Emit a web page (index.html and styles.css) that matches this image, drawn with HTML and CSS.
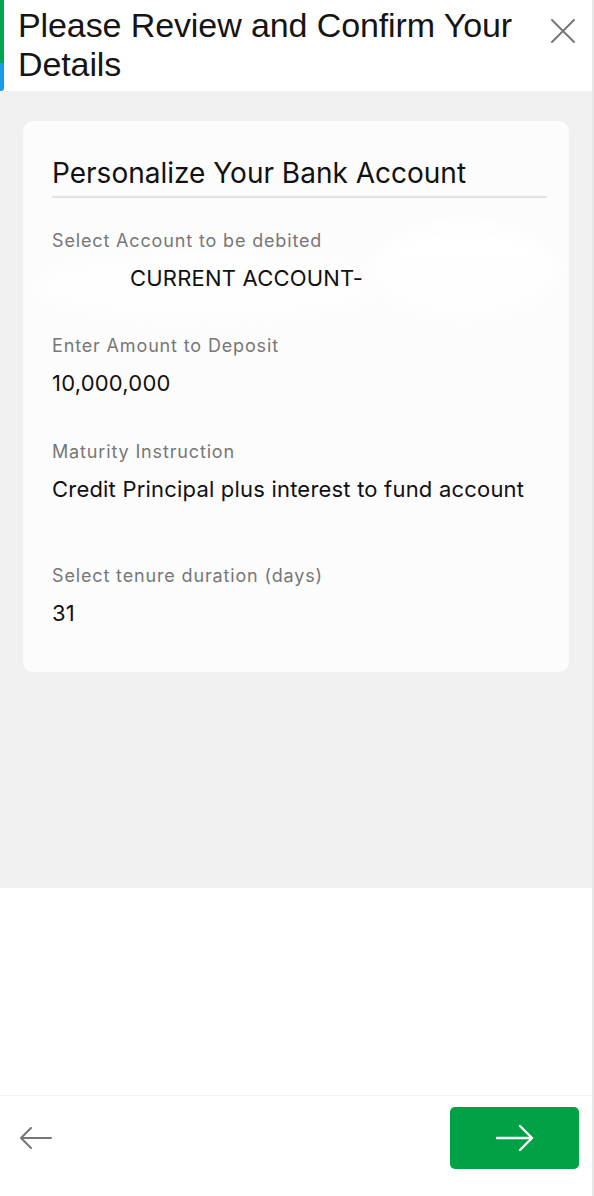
FILE: index.html
```html
<!DOCTYPE html>
<html lang="en">
<head>
<meta charset="utf-8">
<title>Please Review and Confirm Your Details</title>
<link rel="stylesheet" href="styles.css">
</head>
<body>
<div class="screen">
  <header class="header">
    <span class="accent"></span>
    <h1 class="title">Please Review and Confirm Your Details</h1>
    <button class="close" aria-label="Close">
      <svg width="26" height="26" viewBox="0 0 26 26"><path d="M2 2 L24 24 M24 2 L2 24" stroke="#777" stroke-width="2" fill="none" stroke-linecap="round"/></svg>
    </button>
  </header>
  <main class="content">
    <section class="card">
      <h2 class="card-title">Personalize Your Bank Account</h2>
      <div class="field">
        <div class="label">Select Account to be debited</div>
        <div class="value value-account">CURRENT ACCOUNT-</div>
        <span class="blot blot-a"></span>
        <span class="blot blot-b"></span>
      </div>
      <div class="field">
        <div class="label">Enter Amount to Deposit</div>
        <div class="value">10,000,000</div>
      </div>
      <div class="field field-tall">
        <div class="label">Maturity Instruction</div>
        <div class="value">Credit Principal plus interest to fund account</div>
      </div>
      <div class="field">
        <div class="label">Select tenure duration (days)</div>
        <div class="value">31</div>
      </div>
    </section>
  </main>
  <div class="spacer"></div>
  <footer class="footer">
    <button class="back" aria-label="Back">
      <svg width="34" height="24" viewBox="0 0 34 24"><path d="M32 12 H3 M12 2 L2 12 L12 22" stroke="#777" stroke-width="2" fill="none" stroke-linecap="round" stroke-linejoin="round"/></svg>
    </button>
    <button class="next" aria-label="Next">
      <svg width="40" height="30" viewBox="0 0 40 30"><path d="M2 15 H37 M25 3 L37 15 L25 27" stroke="#fff" stroke-width="2.4" fill="none" stroke-linecap="round" stroke-linejoin="round"/></svg>
    </button>
  </footer>
</div>
</body>
</html>
```
FILE: styles.css
```css
* { box-sizing: border-box; }
html, body { margin: 0; padding: 0; }
body {
  font-family: Inter, "Liberation Sans", Arial, sans-serif;
  background: #fff;
  color: #111;
}
.screen {
  width: 594px;
  height: 1196px;
  display: flex;
  flex-direction: column;
  border-right: 2px solid #e6e6e6;
}
.header {
  position: relative;
  height: 91px;
  flex: none;
  display: flex;
  align-items: flex-start;
  padding: 6px 16px 0 18px;
  background: #fff;
}
.accent {
  position: absolute;
  left: 0;
  top: 0;
  width: 4px;
  height: 91px;
  border-radius: 0 0 3px 0;
  background: linear-gradient(#00a650 0, #00a650 63px, #1a9be8 63px, #1a9be8 100%);
}
.title {
  flex: 1;
  margin: 0;
  font-family: "Liberation Sans", Arial, sans-serif;
  font-size: 34px;
  font-weight: 400;
  line-height: 39px;
  letter-spacing: -0.1px;
  color: #151515;
}
.close {
  border: 0;
  background: none;
  padding: 0;
  margin: 12px 0 0 10px;
  width: 26px;
  height: 26px;
}
.content {
  flex: none;
  height: 797px;
  background: #f0f0f0;
  padding: 30px 23px 0 23px;
}
.card {
  background: #fcfcfc;
  border-radius: 10px;
  height: 551px;
  padding: 30px 22px 0 29px;
  overflow: hidden;
}
.card-title {
  margin: 0;
  font-size: 28px;
  font-weight: 400;
  line-height: 44px;
  padding-bottom: 1px;
  border-bottom: 2px solid #e3e4e8;
  color: #111;
}
.field {
  position: relative;
  padding-top: 30px;
  height: 106px;
}
.field:first-of-type { padding-top: 31px; }
.field-tall { height: 124px; }
.label {
  font-size: 18px;
  line-height: 24px;
  letter-spacing: 0.85px;
  color: #777;
  position: relative;
  z-index: 1;
}
.value {
  margin-top: 12px;
  font-size: 22px;
  line-height: 26px;
  letter-spacing: 0.2px;
  color: #111;
  position: relative;
  z-index: 1;
}
.value-account { padding-left: 78px; }
.blot {
  position: absolute;
  background: #fff;
  border-radius: 50%;
  filter: blur(8px);
  opacity: 0.8;
}
.blot-a { left: -12px; top: 58px; width: 330px; height: 60px; }
.blot-b { left: 322px; top: 24px; width: 180px; height: 92px; }
.spacer {
  flex: 1;
  background: #fff;
}
.footer {
  flex: none;
  height: 101px;
  border-top: 1px solid #f3f3f3;
  display: flex;
  align-items: flex-start;
  justify-content: space-between;
  padding: 11px 13px 0 19px;
}
.back {
  border: 0;
  background: none;
  padding: 0;
  margin-top: 19px;
  width: 34px;
  height: 24px;
}
.next {
  border: 0;
  width: 129px;
  height: 62px;
  border-radius: 5px;
  background: #00a245;
  display: flex;
  align-items: center;
  justify-content: center;
  padding: 0;
}
```
